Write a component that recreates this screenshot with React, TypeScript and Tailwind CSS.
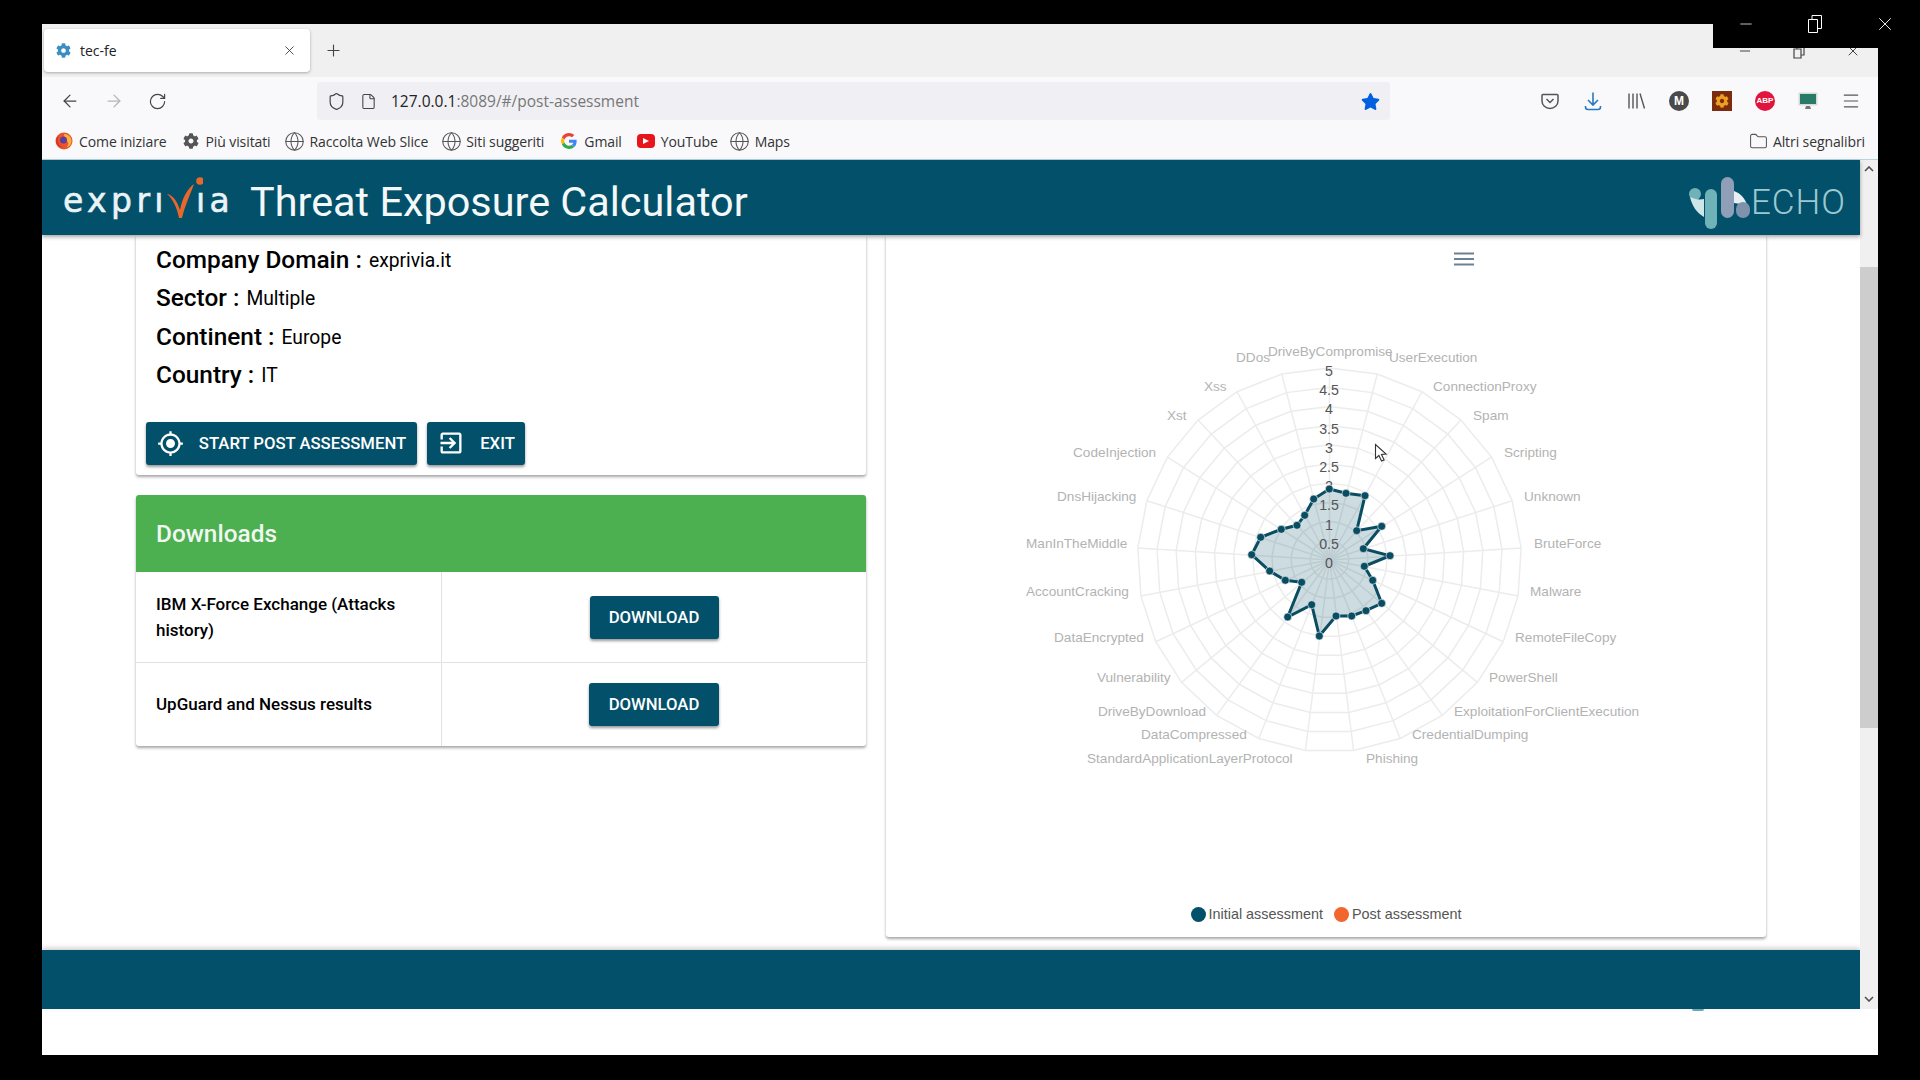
import { ArrowLeft, ArrowRight, File, Folder, Globe, Menu, Minus, Plus, RotateCw, Shield, X } from "lucide-react";
import { FaCog, FaStar } from "react-icons/fa";

const labels: [string, number, number][] = [
  ["DriveByCompromise", 1268, 351],
  ["UserExecution", 1389, 357],
  ["ConnectionProxy", 1433, 386],
  ["Spam", 1473, 415],
  ["Scripting", 1504, 452],
  ["Unknown", 1524, 496],
  ["BruteForce", 1534, 543],
  ["Malware", 1530, 591],
  ["RemoteFileCopy", 1515, 637],
  ["PowerShell", 1489, 677],
  ["ExploitationForClientExecution", 1454, 711],
  ["CredentialDumping", 1412, 734],
  ["Phishing", 1366, 758],
  ["StandardApplicationLayerProtocol", 1087, 758],
  ["DataCompressed", 1141, 734],
  ["DriveByDownload", 1098, 711],
  ["Vulnerability", 1097, 677],
  ["DataEncrypted", 1054, 637],
  ["AccountCracking", 1026, 591],
  ["ManInTheMiddle", 1026, 543],
  ["DnsHijacking", 1057, 496],
  ["CodeInjection", 1073, 452],
  ["Xst", 1167, 415],
  ["Xss", 1204, 386],
  ["DDos", 1236, 357],
];

const points: [number, number][] = [
  [1329.3, 489], [1346, 493.3], [1365, 495.7], [1356.7, 530.7], [1381.7, 526.3],
  [1363.3, 548.7], [1390, 555.7], [1364.3, 566.3], [1372.7, 580.3], [1381.7, 603.3],
  [1366, 610.7], [1351.7, 616], [1336, 616], [1319.3, 636], [1311.7, 604.7],
  [1287.7, 617], [1301.7, 582.3], [1285.3, 580.3], [1269.7, 571], [1251.7, 554.7],
  [1260.7, 537.3], [1281.3, 529.3], [1297, 525.3], [1304.7, 515.3], [1313.7, 499],
];

const ticks = ["0", "0.5", "1", "1.5", "2", "2.5", "3", "3.5", "4", "4.5", "5"];

const cx = 1329.5;
const cy = 560;
const R = 192;

function spoke(i: number, r: number): [number, number] {
  const a = (i * 2 * Math.PI) / 25;
  return [cx + r * Math.sin(a), cy - r * Math.cos(a)];
}

function Radar() {
  return (
    <svg viewBox="1000 330 680 450" className="w-[680px] h-[450px] ml-[114px] shrink-0">
      {[1, 2, 3, 4, 5, 6, 7, 8, 9, 10].map((n) => (
        <polygon
          key={n}
          points={labels.map((_, i) => spoke(i, (R * n) / 10).join(",")).join(" ")}
          fill="none"
          stroke="#ececec"
          strokeWidth="1.5"
        />
      ))}
      {labels.map((_, i) => {
        const [x, y] = spoke(i, R);
        return <line key={i} x1={cx} y1={cy} x2={x} y2={y} stroke="#ececec" strokeWidth="1.5" />;
      })}
      <polygon
        points={points.map((p) => p.join(",")).join(" ")}
        fill="#03506a"
        fillOpacity="0.2"
        stroke="#0a4d62"
        strokeWidth="3"
      />
      {ticks.map((t, i) => (
        <text key={t} x="1329" y={568 - i * 19.2} textAnchor="middle" fontSize="14.2" fill="#555" fontFamily="Liberation Sans, sans-serif">
          {t}
        </text>
      ))}
      {points.map((p, i) => (
        <circle key={i} cx={p[0]} cy={p[1]} r="4" fill="#0a4d62" stroke="#fff" strokeWidth="0.6" />
      ))}
      {labels.map(([l, x, y]) => (
        <text key={l} x={x} y={y + 5} fontSize="13.6" fill="#b3b3b3" fontFamily="Liberation Sans, sans-serif">
          {l}
        </text>
      ))}
      <path d="M1375.5 444.5v14l3.4-3 2.6 5.6 2.6-1.2-2.6-5.4 4.6-.4z" fill="#fff" stroke="#333" strokeWidth="1.1" />
    </svg>
  );
}

function Bookmark({ icon, label, className }: { icon: React.ReactNode; label: string; className: string }) {
  return (
    <div className={`flex items-center gap-[6px] ${className}`}>
      <span className="w-[18px] h-[18px] flex items-center justify-center">{icon}</span>
      <span>{label}</span>
    </div>
  );
}

function FirefoxIcon() {
  return (
    <svg viewBox="0 0 18 18" className="w-[18px] h-[18px]">
      <circle cx="9" cy="9" r="8.5" fill="#e8552d" />
      <path d="M9 2c4 0 7.5 3 7.5 7s-3 6-5 6c3-2 2-6-1-6.5-1-.2-1.5-1-1-2.5z" fill="#fbb03b" />
      <circle cx="8.5" cy="8" r="3.5" fill="#5a3fa0" />
      <path d="M4 3.5C2 8 3 14 9 16 5 16 1 13 1 9c0-2 1-4 3-5.5z" fill="#d7352a" />
    </svg>
  );
}

function GoogleIcon() {
  return (
    <svg viewBox="0 0 48 48" className="w-[16px] h-[16px]">
      <path fill="#ea4335" d="M24 9.5c3.5 0 6.7 1.3 9.1 3.5l6.8-6.8C35.8 2.4 30.2 0 24 0 14.6 0 6.5 5.4 2.6 13.2l7.9 6.1C12.4 13.6 17.7 9.5 24 9.5z" />
      <path fill="#4285f4" d="M46.9 24.5c0-1.6-.1-3.1-.4-4.5H24v9h12.9c-.6 3-2.2 5.5-4.7 7.2l7.7 6c4.5-4.2 7-10.3 7-17.7z" />
      <path fill="#fbbc05" d="M10.5 28.7c-.5-1.5-.8-3-.8-4.7s.3-3.2.8-4.7l-7.9-6.1C.9 16.5 0 20.1 0 24s.9 7.5 2.6 10.8z" />
      <path fill="#34a853" d="M24 48c6.5 0 11.9-2.1 15.9-5.8l-7.7-6c-2.1 1.4-4.9 2.3-8.2 2.3-6.3 0-11.6-4.1-13.5-9.8l-7.9 6.1C6.5 42.6 14.6 48 24 48z" />
    </svg>
  );
}

function BookmarkGlobe() {
  return <Globe className="w-[21px] h-[21px] shrink-0 text-[#555]" strokeWidth={1.2} />;
}

function Toolbar() {
  return (
    <div className="h-[43px] bg-[#f9f9fb] flex items-center">
      <ArrowLeft className="w-[20px] h-[20px] ml-[18px] mt-[5px] text-[#444]" strokeWidth={1.5} />
      <ArrowRight className="w-[20px] h-[20px] ml-[24px] mt-[5px] text-[#b5b5b5]" strokeWidth={1.5} />
      <RotateCw className="w-[19px] h-[19px] ml-[24px] mt-[5px] text-[#444]" strokeWidth={1.5} />
      <div className="ml-[150px] w-[1073px] h-[38px] mt-[5px] bg-[#f0f0f4] rounded-[3px] flex items-center">
        <Shield className="w-[19px] h-[19px] ml-[10px] text-[#444]" strokeWidth={1.5} />
        <File className="w-[17px] h-[17px] ml-[14px] text-[#444]" strokeWidth={1.5} />
        <span className="ml-[14px] mt-[2px] text-[15.5px] text-[#222] font-['Open_Sans',sans-serif]">
          127.0.0.1<span className="text-[#777]">:8089/#/post-assessment</span>
        </span>
        <FaStar className="w-[19px] h-[19px] text-[#0060df] ml-auto mr-[10px]" />
      </div>
      <div className="ml-[150px] flex items-center gap-[23px] mt-[5px]">
        <svg viewBox="0 0 20 20" className="w-[20px] h-[20px]">
          <path d="M3 3.5h14a1 1 0 0 1 1 1V10a8 7.5 0 0 1-16 0V4.5a1 1 0 0 1 1-1z" fill="none" stroke="#555" strokeWidth="1.5" />
          <path d="M6.5 8l3.5 3.5L13.5 8" fill="none" stroke="#555" strokeWidth="1.5" />
        </svg>
        <svg viewBox="0 0 20 20" className="w-[20px] h-[20px]">
          <path d="M10 1.5v12M5 9l5 5 5-5M2.5 15v1a2.5 2.5 0 0 0 2.5 2.5h10a2.5 2.5 0 0 0 2.5-2.5v-1" fill="none" stroke="#2a78bd" strokeWidth="1.6" />
        </svg>
        <svg viewBox="0 0 20 20" className="w-[20px] h-[20px]">
          <path d="M3 2.5v15M7 2.5v15M11 2.5v15M14 2.5l4.5 15" fill="none" stroke="#555" strokeWidth="1.4" />
        </svg>
        <div className="w-[20px] h-[20px] rounded-full bg-[#4a4a4a] text-white text-[12px] font-bold flex items-center justify-center font-['Liberation_Sans',sans-serif]">M</div>
        <div className="w-[20px] h-[20px] bg-[#7a2c0c] flex items-center justify-center">
          <FaCog className="w-[14px] h-[14px] text-[#f0a020]" />
        </div>
        <div className="w-[20px] h-[20px] rounded-full bg-[#e0143c] text-white text-[8px] font-bold flex items-center justify-center font-['Liberation_Sans',sans-serif]">ABP</div>
        <svg viewBox="0 0 20 20" className="w-[20px] h-[20px]">
          <rect x="0.5" y="1.5" width="19" height="13" rx="1" fill="#d8d8d8" />
          <rect x="2" y="3" width="16" height="10" fill="#2a7a68" />
          <path d="M8 15h4l1 3H7z" fill="#777" />
        </svg>
        <Menu className="w-[20px] h-[20px] text-[#555]" strokeWidth={1.4} />
      </div>
    </div>
  );
}

function Bookmarks() {
  return (
    <div className="h-[39px] bg-[#f9f9fb] flex items-center pt-[3px] pl-[13px] pr-[13px] text-[14px] text-[#333] font-['Open_Sans',sans-serif] tracking-[-0.1px]">
      <Bookmark icon={<FirefoxIcon />} label="Come iniziare" className="" />
      <Bookmark icon={<FaCog className="w-[16px] h-[16px] text-[#555]" />} label="Più visitati" className="ml-[15px]" />
      <Bookmark icon={<BookmarkGlobe />} label="Raccolta Web Slice" className="ml-[15px]" />
      <Bookmark icon={<BookmarkGlobe />} label="Siti suggeriti" className="ml-[14px]" />
      <Bookmark icon={<GoogleIcon />} label="Gmail" className="ml-[16px]" />
      <Bookmark
        icon={
          <span className="w-[18px] h-[14px] bg-[#e8141c] rounded-[4px] flex items-center justify-center">
            <span className="w-0 h-0 border-y-[3.5px] border-y-transparent border-l-[6px] border-l-white" />
          </span>
        }
        label="YouTube"
        className="ml-[15px]"
      />
      <Bookmark icon={<BookmarkGlobe />} label="Maps" className="ml-[13px]" />
      <div className="ml-auto flex items-center gap-[5px]">
        <Folder className="w-[19px] h-[19px] text-[#555]" strokeWidth={1.3} />
        <span>Altri segnalibri</span>
      </div>
    </div>
  );
}

function EchoLogo() {
  return (
    <div className="flex items-center">
      <svg viewBox="-5 0 68 52" className="w-[68px] h-[52px]">
        <circle cx="6" cy="17" r="6" fill="#6fb3b8" />
        <path d="M1 20c4 2 9 3 14 2v18C8 36 3 29 1 20z" fill="#cfe6e8" />
        <rect x="16" y="12" width="12" height="40" rx="6" fill="#6fb3b8" />
        <rect x="32" y="0" width="13" height="41" rx="6.5" fill="#8f9fb8" />
        <path d="M45 14c6 2 11 7 13 14l-13-2z" fill="#e8eef2" />
        <rect x="47" y="25" width="14" height="16" rx="7" fill="#7f92ac" />
      </svg>
      <span className="text-[35px] leading-none font-light text-[#9cc8d0] font-['Roboto',sans-serif] tracking-[1px] -ml-[1px]">ECHO</span>
    </div>
  );
}

function Header() {
  return (
    <header className="h-[75px] bg-[#03506a] flex items-center justify-between shrink-0 shadow-[0_2px_4px_rgba(0,0,0,0.35)] z-10">
      <div className="flex items-center pl-[21px]">
        <div className="flex items-center w-[187px] pt-[6px] text-[33px] leading-none text-[#eaf3f5] font-['DejaVu_Sans',sans-serif] tracking-[4.4px] [-webkit-text-stroke:0.6px_#eaf3f5]">
          <span>exprı</span>
          <svg viewBox="0 0 38 44" className="w-[38px] h-[44px] -mt-[8px] -ml-[3px] -mr-[7px] shrink-0">
            <path d="M2 19C8 20 12 26 15 35 17 24 22 14 29 9 26 18 20 30 17 43H14C12 33 8 24 2 19Z" fill="#e8682c" />
            <circle cx="35" cy="6" r="3.8" fill="#e8682c" />
          </svg>
          <span>ıa</span>
        </div>
        <h1 className="mt-[10px] text-[41.4px] leading-none font-normal text-[#f4f8f9] font-['Roboto',sans-serif]">Threat Exposure Calculator</h1>
      </div>
      <div className="pr-[14px] pt-[10px]">
        <EchoLogo />
      </div>
    </header>
  );
}

function InfoRow({ name, value }: { name: string; value: string }) {
  return (
    <div className="h-[38.4px] flex items-center text-black font-['Roboto',sans-serif]">
      <span className="text-[24.4px] font-medium">{name} :</span>
      <span className="text-[19.3px] ml-[7px] mt-[2px]">{value}</span>
    </div>
  );
}

function PrimaryButton({ children, className }: { children: React.ReactNode; className: string }) {
  return (
    <button className={`h-[43px] bg-[#03506a] text-white rounded-[3px] font-medium text-[16.7px] font-['Roboto',sans-serif] flex items-center justify-center shadow-[0_2px_3px_rgba(0,0,0,0.4)] ${className}`}>
      {children}
    </button>
  );
}

function LeftColumn() {
  return (
    <div className="w-[730px] shrink-0">
      <div className="h-[240px] bg-white rounded-b-[3px] shadow-[0_2px_3px_rgba(0,0,0,0.35)] pt-[6px]">
        <div className="pl-[20px]">
          <InfoRow name="Company Domain" value="exprivia.it" />
          <InfoRow name="Sector" value="Multiple" />
          <InfoRow name="Continent" value="Europe" />
          <InfoRow name="Country" value="IT" />
        </div>
        <div className="flex gap-[10px] pl-[10px] mt-[27px]">
          <PrimaryButton className="w-[271px]">
            <svg viewBox="0 0 24 24" className="w-[27px] h-[27px] fill-white mr-[15px]">
              <path d="M12 8c-2.21 0-4 1.79-4 4s1.79 4 4 4 4-1.79 4-4-1.79-4-4-4zm8.94 3c-.46-4.17-3.77-7.48-7.94-7.94V1h-2v2.06C6.83 3.52 3.52 6.83 3.06 11H1v2h2.06c.46 4.17 3.77 7.48 7.94 7.94V23h2v-2.06c4.17-.46 7.48-3.77 7.94-7.94H23v-2h-2.06zM12 19c-3.87 0-7-3.13-7-7s3.13-7 7-7 7 3.13 7 7-3.13 7-7 7z" />
            </svg>
            START POST ASSESSMENT
          </PrimaryButton>
          <PrimaryButton className="w-[98px]">
            <svg viewBox="0 0 24 24" className="w-[28px] h-[28px] fill-white mr-[15px]">
              <path d="M10.09 15.59L11.5 17l5-5-5-5-1.41 1.41L12.67 11H3v2h9.67l-2.58 2.59zM19 3H5c-1.11 0-2 .9-2 2v4h2V5h14v14H5v-4H3v4c0 1.1.89 2 2 2h14c1.1 0 2-.9 2-2V5c0-1.1-.9-2-2-2z" />
            </svg>
            EXIT
          </PrimaryButton>
        </div>
      </div>
      <div className="mt-[20px] bg-white rounded-[3px] shadow-[0_2px_3px_rgba(0,0,0,0.35)] overflow-hidden font-['Roboto',sans-serif]">
        <div className="h-[77px] bg-[#4caf50] flex items-center pl-[20px] pt-[2px] text-[24.4px] font-medium text-[#f1f8f1]">Downloads</div>
        <div className="flex h-[91px] border-b border-[#e2e2e2]">
          <div className="w-[306px] border-r border-[#e2e2e2] pl-[20px] pt-[19px] text-[17px] leading-[26px] font-medium text-black pr-[20px]">
            IBM X-Force Exchange (Attacks history)
          </div>
          <div className="flex-1 flex items-center justify-center pt-[1px]">
            <PrimaryButton className="w-[129px]">DOWNLOAD</PrimaryButton>
          </div>
        </div>
        <div className="flex h-[83px]">
          <div className="w-[306px] border-r border-[#e2e2e2] pl-[20px] flex items-center text-[17px] font-medium text-black">UpGuard and Nessus results</div>
          <div className="flex-1 flex items-center justify-center">
            <PrimaryButton className="w-[130px]">DOWNLOAD</PrimaryButton>
          </div>
        </div>
      </div>
    </div>
  );
}

function ChartCard() {
  return (
    <div className="w-[880px] h-[702px] ml-[20px] shrink-0 bg-white rounded-b-[3px] shadow-[0_2px_3px_rgba(0,0,0,0.35)] flex flex-col">
      <div className="h-[95px] shrink-0 pl-[568px] pt-[17px]">
        <svg viewBox="0 0 20 14" className="w-[20px] h-[14px]">
          <path d="M0 1.5h20M0 7h20M0 12.5h20" stroke="#6e8192" strokeWidth="2" />
        </svg>
      </div>
      <Radar />
      <div className="flex items-center justify-center mt-[124px] text-[14.4px] text-[#555] font-['Liberation_Sans',sans-serif]">
        <span className="w-[15px] h-[15px] rounded-full bg-[#03506a] mr-[3px]" />
        <span>Initial assessment</span>
        <span className="w-[15px] h-[15px] rounded-full bg-[#f2652d] ml-[11px] mr-[3px]" />
        <span>Post assessment</span>
      </div>
    </div>
  );
}

function Scrollbar() {
  return (
    <div className="w-[18px] bg-[#f0f0f0] flex flex-col items-center shrink-0">
      <svg viewBox="0 0 10 6" className="w-[10px] h-[6px] mt-[6px]">
        <path d="M1 5l4-4 4 4" fill="none" stroke="#505050" strokeWidth="1.6" />
      </svg>
      <div className="w-[18px] h-[461px] bg-[#cdcdcd] mt-[95px]" />
      <svg viewBox="0 0 10 6" className="w-[10px] h-[6px] mt-auto mb-[7px]">
        <path d="M1 1l4 4 4-4" fill="none" stroke="#505050" strokeWidth="1.6" />
      </svg>
    </div>
  );
}

export default function App() {
  return (
    <div className="w-[1920px] h-[1080px] bg-black pt-[24px] pl-[42px] relative overflow-hidden">
      <div className="w-[1836px] h-[1031px] bg-white flex flex-col">
        <div className="h-[53px] bg-[#f0f0f0] flex items-center pl-[2px] shrink-0">
          <div className="w-[266px] h-[43px] bg-white rounded-[4px] shadow-[0_1px_3px_rgba(0,0,0,0.3)] flex items-center pl-[12px] pr-[13px] text-[14px] text-[#222] font-['Open_Sans',sans-serif]">
            <FaCog className="w-[15px] h-[15px] text-[#3b8ec4]" />
            <span className="ml-[9px]">tec-fe</span>
            <X className="w-[15px] h-[15px] ml-auto text-[#444]" strokeWidth={1.5} />
          </div>
          <Plus className="w-[19px] h-[19px] ml-[14px] text-[#444]" strokeWidth={1.4} />
          <div className="ml-auto mr-[17px] flex items-center gap-[38px]">
            <Minus className="w-[16px] h-[16px] text-[#444]" strokeWidth={1.5} />
            <svg viewBox="0 0 16 16" className="w-[16px] h-[16px]">
              <path d="M3 6h7v9H3zM6 6V2h7v10h-3" fill="none" stroke="#444" strokeWidth="1.2" />
            </svg>
            <X className="w-[16px] h-[16px] text-[#444]" strokeWidth={1.5} />
          </div>
        </div>
        <Toolbar />
        <Bookmarks />
        <div className="h-[850px] flex shrink-0 border-t border-[#b8d4dc]">
          <div className="w-[1818px] flex flex-col">
            <Header />
            <div className="flex-1 min-h-0 pl-[94px] flex">
              <LeftColumn />
              <ChartCard />
            </div>
            <footer className="h-[59px] bg-[#03506a] shrink-0 shadow-[0_-2px_5px_rgba(0,0,0,0.2)]" />
          </div>
          <Scrollbar />
        </div>
        <div className="w-[12px] h-[2px] ml-[1650px] rounded-b-full bg-[#6aa7b3]" />
      </div>
      <div className="absolute top-0 left-[1713px] w-[207px] h-[48px] bg-black flex items-center text-white">
        <Minus className="w-[18px] h-[18px] ml-[24px]" strokeWidth={1} />
        <svg viewBox="0 0 16 20" className="w-[16px] h-[20px] ml-[52px]">
          <path d="M1.5 5.5h9v13h-9zM5 5.5V1.5h9.5v13h-4" fill="none" stroke="#fff" strokeWidth="1" />
        </svg>
        <X className="w-[22px] h-[22px] ml-[51px]" strokeWidth={1} />
      </div>
    </div>
  );
}
